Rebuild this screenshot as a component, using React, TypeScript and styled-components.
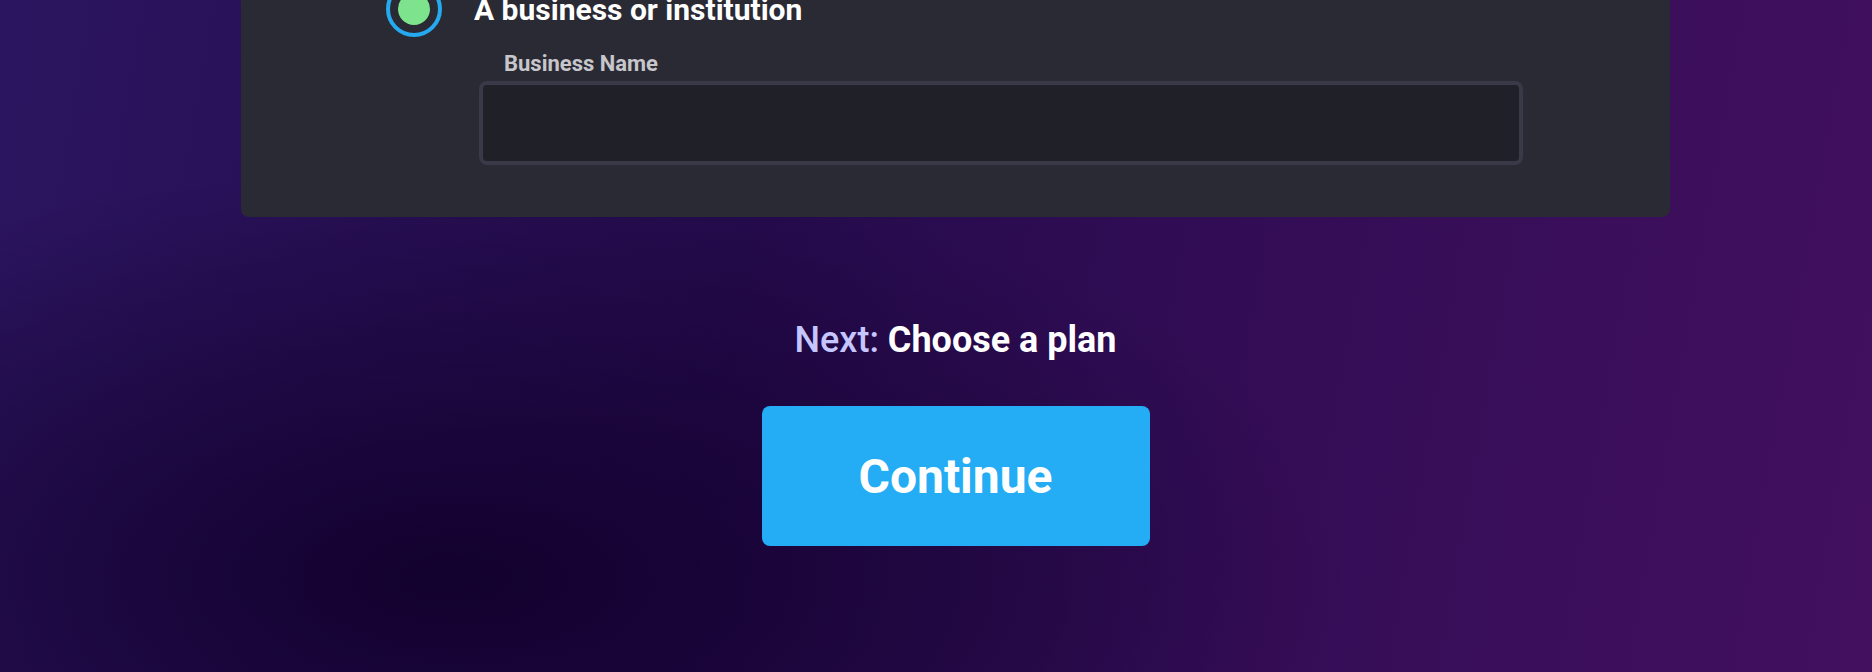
import * as React from 'react'
import styled, { createGlobalStyle } from 'styled-components'

const GlobalStyle = createGlobalStyle`
  html, body {
    margin: 0;
    padding: 0;
    height: 672px;
    overflow: hidden;
  }
  body {
    font-family: Roboto, "Liberation Sans", Arial, sans-serif;
    background-color: #240a4a;
    background-image:
      radial-gradient(ellipse 900px 420px at 24% 86%, rgba(18, 0, 44, 0.95) 0%, rgba(18, 0, 44, 0) 100%),
      linear-gradient(100deg, #2c1560 0%, #250b4d 40%, #350d57 70%, #42105f 100%);
  }
`

const Page = styled.main`
  height: 672px;
  display: flex;
  flex-direction: column;
  align-items: center;
  margin: 0 202px 0 241px;
`

const Card = styled.section`
  width: 100%;
  box-sizing: border-box;
  margin-top: -19px;
  padding: 0 147px 52px 145px;
  background: #2a2a34;
  border-radius: 0 0 8px 8px;
`

const OptionRow = styled.label`
  display: flex;
  align-items: center;
  gap: 32px;
  height: 56px;
`

const Radio = styled.span<{ checked?: boolean }>`
  width: 56px;
  height: 56px;
  box-sizing: border-box;
  border-radius: 50%;
  border: 4px solid #25a9ef;
  display: flex;
  align-items: center;
  justify-content: center;
  flex-shrink: 0;

  &::after {
    content: '';
    width: 32px;
    height: 32px;
    border-radius: 50%;
    background: ${p => (p.checked ? '#7ee38d' : 'transparent')};
  }
`

const OptionTitle = styled.span`
  color: #ffffff;
  font-size: 30px;
  font-weight: 700;
`

const Field = styled.div`
  margin: 14px 0 0 93px;
  display: flex;
  flex-direction: column;
  gap: 5px;
`

const FieldLabel = styled.span`
  padding-left: 25px;
  color: #c6c6cb;
  font-size: 22px;
  font-weight: 700;
`

const TextInput = styled.input`
  height: 84px;
  box-sizing: border-box;
  background: #202029;
  border: 4px solid #393947;
  border-radius: 8px;
  color: #ffffff;
  font-family: inherit;
  font-size: 24px;
  padding: 0 20px;
  outline: none;
`

const NextLine = styled.p`
  margin: 102px 0 0;
  font-size: 36px;
  font-weight: 700;
  color: #ffffff;
`

const NextTag = styled.span`
  color: #c5c5ff;
  font-weight: 500;
`

const ContinueButton = styled.button`
  margin-top: 45px;
  width: 388px;
  height: 140px;
  border: none;
  border-radius: 8px;
  background: #24acf5;
  color: #ffffff;
  font-family: inherit;
  font-size: 48px;
  font-weight: 700;
  cursor: pointer;
`

export default function App() {
  return (
    <>
      <GlobalStyle />
      <Page>
        <Card>
          <OptionRow>
            <Radio checked />
            <OptionTitle>A business or institution</OptionTitle>
          </OptionRow>
          <Field>
            <FieldLabel>Business Name</FieldLabel>
            <TextInput type="text" />
          </Field>
        </Card>
        <NextLine>
          <NextTag>Next:</NextTag> Choose a plan
        </NextLine>
        <ContinueButton>Continue</ContinueButton>
      </Page>
    </>
  )
}
